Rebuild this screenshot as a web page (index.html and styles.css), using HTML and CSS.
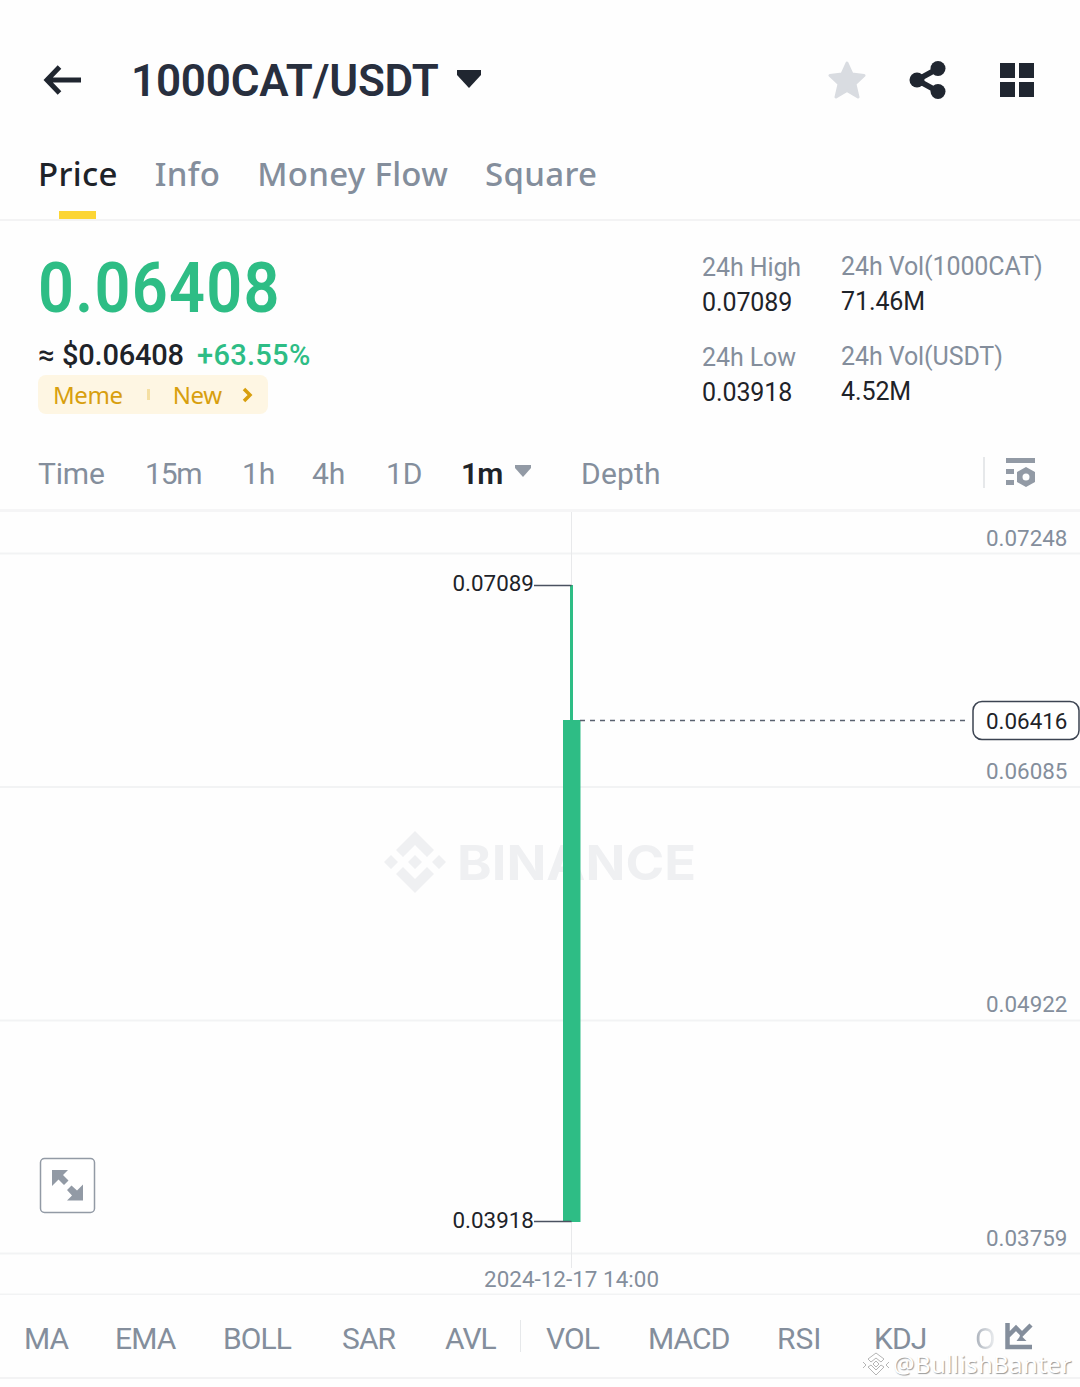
FILE: index.html
```
<!DOCTYPE html>
<html lang="en">
<head>
    <meta charset="UTF-8">
    <meta name="viewport" content="width=device-width, initial-scale=1.0">
    <title>1000CAT/USDT</title>
    <link rel="stylesheet" href="styles.css">
</head>
<body>
    <header class="header">
        <svg class="back" width="40" height="32" viewBox="0 0 40 32"><path d="M17.500 3 5 16l12.500 13M6 16h33" fill="none" stroke="currentColor" stroke-width="5"/></svg>
        <h1 class="pair">1000CAT/USDT</h1>
        <svg class="pair-arrow" width="24" height="18" viewBox="0 0 24 18"><path d="M0 0h24v5L12 18 0 5z" fill="currentColor"/></svg>
        <div class="header-icons">
            <svg width="38" height="38" viewBox="0 0 38 38"><path d="M19 2l5 11 12 1.500-9 8.500 3 13-11-6.500L8 36l3-13-9-8.500L14 13z" fill="#d9dce1" stroke="#d9dce1" stroke-width="3" stroke-linejoin="round"/></svg>
            <svg width="38" height="40" viewBox="0 0 38 40"><path d="M29 8.500 8 20l21 11.500" fill="none" stroke="currentColor" stroke-width="5.500"/><circle cx="29" cy="8.500" r="7.500" fill="currentColor"/><circle cx="8" cy="20" r="7.500" fill="currentColor"/><circle cx="29" cy="31.500" r="7.500" fill="currentColor"/></svg>
            <svg width="34" height="34" viewBox="0 0 34 34"><path d="M0 0h15v15H0zM19 0h15v15H19zM0 19h15v15H0zM19 19h15v15H19z" fill="currentColor"/></svg>
        </div>
    </header>

    <nav class="tabs">
        <a class="tab active">Price</a>
        <a class="tab">Info</a>
        <a class="tab money">Money Flow</a>
        <a class="tab">Square</a>
    </nav>

    <section class="summary">
        <div class="quote">
            <div class="last-price">0.06408</div>
            <div class="fiat"><span class="approx">≈</span><span class="usd">$0.06408</span><span class="change">+63.55%</span></div>
            <div class="tags">
                <span>Meme</span><i></i><span>New</span>
                <svg width="12" height="16" viewBox="0 0 12 16"><path d="M2 2l6 6-6 6" fill="none" stroke="currentColor" stroke-width="3.500"/></svg>
            </div>
        </div>
        <dl class="stats">
            <div><dt class="high">24h High</dt><dd>0.07089</dd></div>
            <div><dt>24h Low</dt><dd>0.03918</dd></div>
        </dl>
        <dl class="stats volume">
            <div><dt>24h Vol(1000CAT)</dt><dd>71.46M</dd></div>
            <div><dt>24h Vol(USDT)</dt><dd>4.52M</dd></div>
        </dl>
    </section>

    <nav class="intervals">
        <span>Time</span>
        <span>15m</span>
        <span>1h</span>
        <span>4h</span>
        <span>1D</span>
        <span class="selected">1m <svg width="16" height="12" viewBox="0 0 16 12"><path d="M0 0h16v3L8 12 0 3z" fill="#929aa5"/></svg></span>
        <span class="depth">Depth</span>
        <svg class="settings" width="54" height="32" viewBox="0 0 54 32">
            <path d="M1 0h2v31H1z" fill="#e6e8ea"/>
            <path d="M24 1h29v5H24zM24 12h8v5h-8zM24 23h8v5h-8z" fill="#929aa5"/>
            <path fill-rule="evenodd" d="M44 10l9 5v10l-9 5-9-5V15zM44 16.500a3.500 3.500 0 1 0 0 7 3.500 3.500 0 1 0 0-7z" fill="#929aa5"/>
        </svg>
    </nav>

    <main class="chart">
        <svg width="1080" height="783" viewBox="0 512 1080 783">
            <!-- grid -->
            <path class="grid" d="M0 553.500h1080M0 787h1080M0 1020.500h1080M0 1253.500h1080M0 1294.500h1080"/>
            <path class="crosshair" d="M571.500 512v756"/>

            <!-- logo -->
            <g fill="#eff0f2">
                <path d="M415 831l19 19-7 7-12-12-12 12-7-7zM415 893l-19-19 7-7 12 12 12-12 7 7zM415 855l7 7-7 7-7-7zM391 855l7 7-7 7-7-7zM439 855l7 7-7 7-7-7z"/>
                <text class="brand" x="457" y="880" textLength="239" lengthAdjust="spacingAndGlyphs">BINANCE</text>
            </g>

            <!-- candle -->
            <path d="M570 585h3v136h-3zM563 720h17.500v502H563z" fill="#2ebd85"/>
            <path class="marker" d="M534 585.500h37.500M534 1221.500h37.500"/>
            <path class="last-line" d="M580 720.500h389"/>

            <text class="label dark" x="452.500" y="591">0.07089</text>
            <text class="label dark" x="452.500" y="1228">0.03918</text>
            <text class="label" x="986" y="546">0.07248</text>
            <text class="label" x="986" y="779">0.06085</text>
            <text class="label" x="986" y="1012">0.04922</text>
            <text class="label" x="986" y="1246">0.03759</text>
            <text class="label" x="484" y="1287" textLength="175">2024-12-17 14:00</text>

            <rect x="973" y="701.500" width="106" height="38" rx="9" fill="#fff" stroke="#3c4452" stroke-width="1.500"/>
            <text class="label dark" x="986" y="729">0.06416</text>

            <!-- fullscreen -->
            <rect x="40.500" y="1158.500" width="54" height="54" rx="4" fill="#fff" stroke="#929aa5" stroke-width="1.500"/>
            <path d="M52 1170h16l-5 5 5.500 5.500-4.500 4.500-5.500-5.500-6.500 6.500zM83 1200.500h-16l5-5-5-5.500 4.500-4.500 5.500 5 6-6z" fill="#929aa5"/>
        </svg>
    </main>

    <footer class="indicators">
        <span>MA</span>
        <span>EMA</span>
        <span>BOLL</span>
        <span>SAR</span>
        <span>AVL</span>
        <i></i>
        <span>VOL</span>
        <span>MACD</span>
        <span>RSI</span>
        <span>KDJ</span>
        <span class="fade">O</span>
        <svg width="28" height="28" viewBox="0 0 28 28"><path d="M2.500 1v24H27M3 14l8-8 6 6 9-9" fill="none" stroke="#848e9c" stroke-width="4.500"/><path d="M15.500 11l2 4 4 4h-10l3-4z" fill="#848e9c"/></svg>
        <div class="signature">
            <svg width="28" height="24" viewBox="0 0 28 24"><path d="M6 7l8-6 8 6-3 3-5-4-5 4zM1 10l3 3-3 3M27 10l-3 3 3 3M11 12l3-3 3 3-3 3zM6 15l8 8 8-8-3-2-5 5-5-5z" fill="#fff" stroke="#b5b5b5" stroke-width="1"/></svg>
            <span>@BullishBanter</span>
        </div>
    </footer>
</body>
</html>
```
FILE: styles.css
```
* {
    box-sizing: border-box;
}
body {
    margin: 0;
    height: 1387px;
    overflow: hidden;
    background-color: #fefefe;
    color: #1e2329;
    font-family: "Roboto", "Liberation Sans", sans-serif;
}
svg {
    display: block;
    flex-shrink: 0;
}
.header {
    display: flex;
    align-items: center;
    height: 130px;
    padding: 29px 46px 0 42px;
    color: #202630;
}
.pair {
    width: 308px;
    margin: 2px 18px 0 49px;
    font-size: 44px;
    font-weight: 600;
    letter-spacing: -0.2px;
    white-space: nowrap;
    color: #282f3e;
}
.pair-arrow {
    margin-top: -2px;
}
.header-icons {
    display: flex;
    align-items: center;
    margin-left: auto;
    gap: 0 53px;
}
.header-icons svg:first-child {
    margin-right: -10px;
}
.tabs {
    display: flex;
    height: 91px;
    padding-left: 38px;
    gap: 37px;
    border-bottom: 2px solid #f3f3f4;
    font: 500 33px/88px "Noto Sans", sans-serif;
    letter-spacing: 0.3px;
    color: #848e9c;
    white-space: nowrap;
}
.tab.active {
    position: relative;
    color: #1e2329;
}
.tab.active::after {
    content: "";
    position: absolute;
    left: 21px;
    bottom: 0;
    width: 37px;
    height: 8px;
    background-color: #fcd535;
}
.summary {
    display: flex;
    height: 219px;
    padding: 29px 0 0 38px;
}
.quote {
    width: 664px;
}
.last-price {
    width: 270px;
    height: 75px;
    padding-top: 1px;
    font-size: 70px;
    line-height: 75px;
    font-weight: 600;
    letter-spacing: 1.4px;
    color: #2ebd85;
    transform: scaleX(0.9);
    transform-origin: left;
}
.fiat {
    display: flex;
    height: 50px;
    padding-top: 10px;
    font-size: 29px;
    line-height: 40px;
    font-weight: 500;
}
.approx {
    width: 24px;
}
.usd {
    width: 135px;
    letter-spacing: -0.2px;
}
.change {
    letter-spacing: 0.3px;
    color: #2ebd85;
}
.tags {
    display: flex;
    align-items: center;
    width: 230px;
    height: 39px;
    padding-left: 15px;
    border-radius: 8px;
    background-color: #fef6e3;
    color: #d89f0e;
    font: 24px/37px "Noto Sans", sans-serif;
    letter-spacing: -0.4px;
}
.tags i {
    width: 3px;
    height: 11px;
    margin: 0 23px 0 24px;
    background-color: #f5dfa2;
}
.tags svg {
    margin-left: 20px;
}
.stats {
    width: 139px;
    margin: 0;
    font-size: 25px;
    line-height: 35px;
    letter-spacing: -0.1px;
    white-space: nowrap;
}
.stats > div {
    height: 90px;
}
.stats dt {
    color: #848e9c;
}
.stats dd {
    margin: 0;
}
.volume {
    width: 210px;
    margin-top: -1px;
}
.intervals {
    display: grid;
    grid-template-columns: 107px 97px 70px 74px 75px 120px 401px 60px;
    align-items: center;
    height: 72px;
    padding: 0 0 2px 38px;
    border-bottom: 3px solid #f5f5f6;
    color: #848e9c;
    font-size: 30px;
    letter-spacing: -0.2px;
}
.intervals > span:nth-child(2) {
    letter-spacing: -1.2px;
}
.intervals .depth {
    letter-spacing: 0.2px;
}
.intervals .selected {
    display: flex;
    align-items: center;
    gap: 12px;
    letter-spacing: -0.8px;
    color: #1e2329;
    font-weight: 600;
}
.selected svg {
    margin-top: -5px;
}
.settings {
    margin-top: -2px;
}
.chart {
    height: 783px;
}
.grid {
    stroke: #f2f3f4;
    stroke-width: 2;
}
.crosshair {
    stroke: #e8e9eb;
}
.marker {
    stroke: #4a5160;
    stroke-width: 1.5;
}
.last-line {
    stroke: #5a6270;
    stroke-width: 1.5;
    stroke-dasharray: 5 5;
}
.brand {
    font: 700 48px "Inter", sans-serif;
}
.label {
    font-size: 22.4px;
    fill: #848e9c;
}
.label.dark {
    fill: #1e2329;
}
.indicators {
    position: relative;
    display: grid;
    grid-template-columns: 91px 108px 119px 103px 75px 26px 102px 129px 97px 101px 30px 28px;
    align-items: center;
    height: 84px;
    padding: 4px 0 0 24px;
    border-bottom: 2px solid #f3f3f4;
    font-size: 30px;
    letter-spacing: -0.9px;
    color: #848e9c;
}
.indicators > span:nth-of-type(8) {
    letter-spacing: 0;
}
.indicators i {
    width: 1px;
    height: 32px;
    margin-top: -5px;
    background-color: #e6e8ea;
}
.indicators > svg {
    margin-top: -4px;
}
.fade {
    width: 20px;
    background-image: linear-gradient(90deg, #a9b0ba, #eceef0);
    background-clip: text;
    color: transparent;
}
.signature {
    position: absolute;
    left: 862px;
    top: 53px;
    display: flex;
    align-items: center;
    gap: 3px;
    font: 24px/32px "Noto Sans", sans-serif;
    letter-spacing: 0.4px;
    color: #fff;
    text-shadow: 1px 1px 1px #999;
}
```
